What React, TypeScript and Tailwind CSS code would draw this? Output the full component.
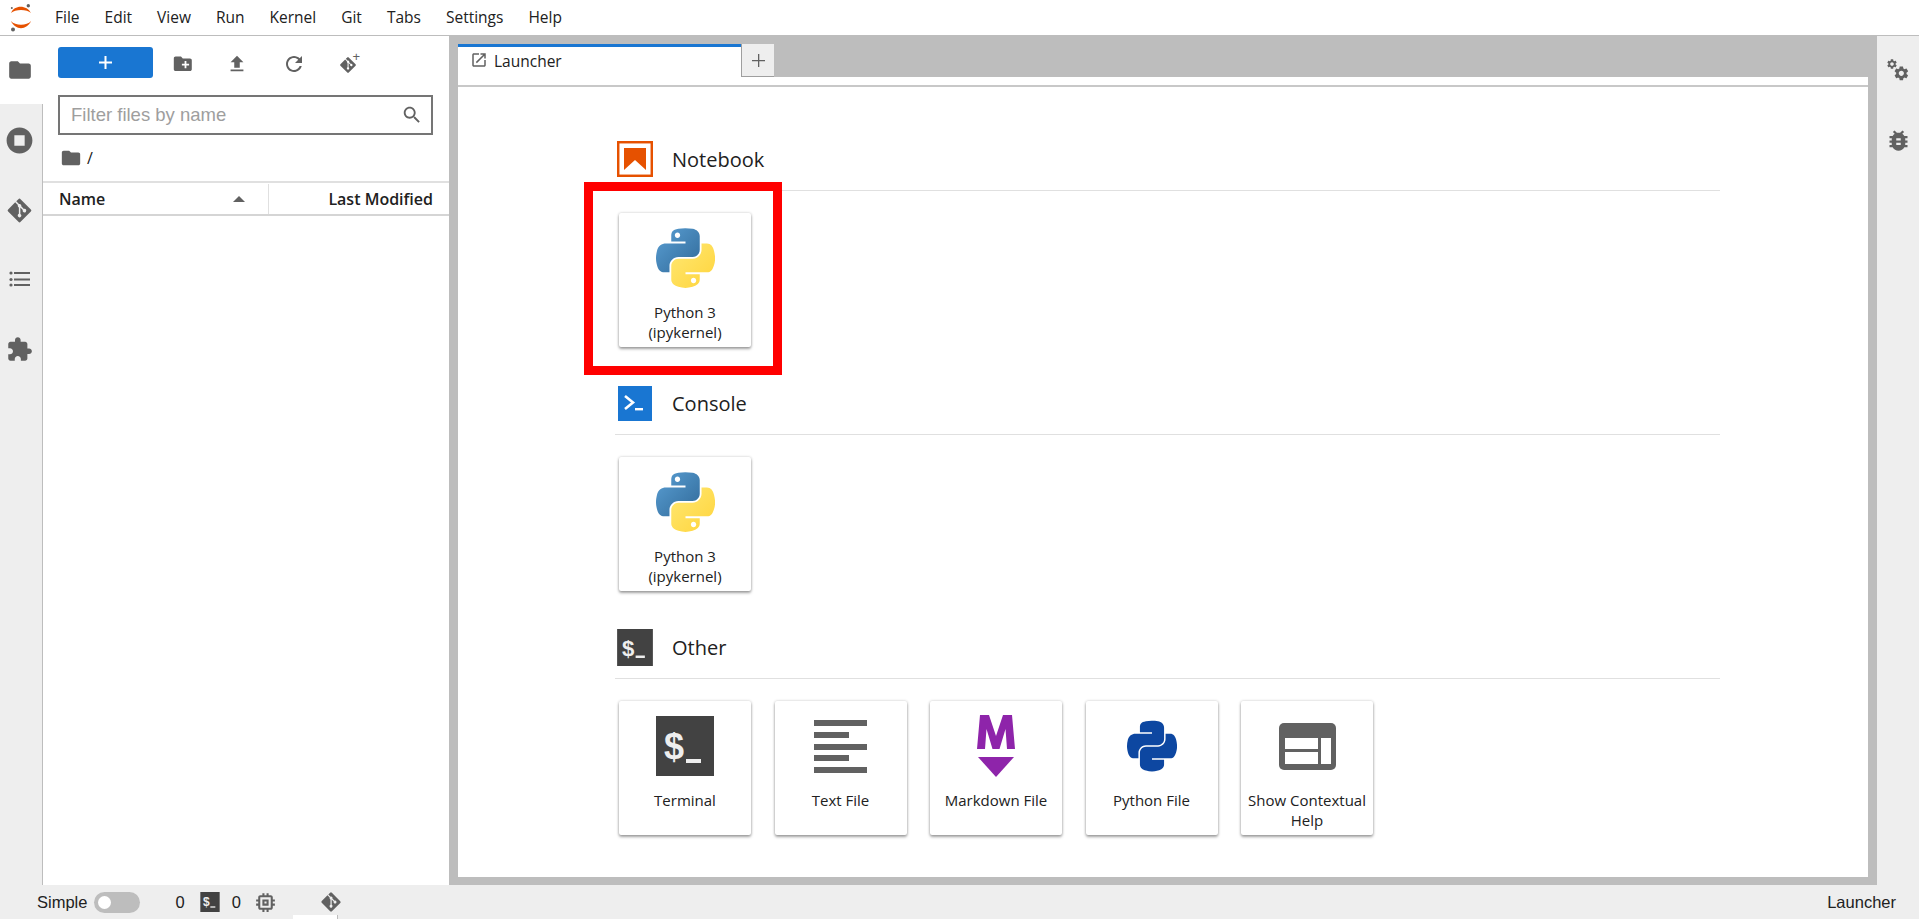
import { FaGitAlt } from "react-icons/fa";

const sans = "font-['Open_Sans',sans-serif]";
const arial = "font-['Liberation_Sans',sans-serif]";

const menus = ["File", "Edit", "View", "Run", "Kernel", "Git", "Tabs", "Settings", "Help"];

const paths = {
  folder: "M10 4H4c-1.1 0-1.99.9-1.99 2L2 18c0 1.1.9 2 2 2h16c1.1 0 2-.9 2-2V8c0-1.1-.9-2-2-2h-8l-2-2z",
  stop: "M12 2C6.48 2 2 6.48 2 12s4.48 10 10 10 10-4.48 10-10S17.52 2 12 2zm4 14H8V8h8v8z",
  extension:
    "M20.5 11H19V7c0-1.1-.9-2-2-2h-4V3.5C13 2.12 11.88 1 10.5 1S8 2.12 8 3.5V5H4c-1.1 0-1.99.9-1.99 2v3.8H3.5c1.49 0 2.7 1.21 2.7 2.7s-1.21 2.7-2.7 2.7H2V20c0 1.1.9 2 2 2h3.8v-1.5c0-1.49 1.21-2.7 2.7-2.7 1.49 0 2.7 1.21 2.7 2.7V22H17c1.1 0 2-.9 2-2v-4h1.5c1.38 0 2.5-1.12 2.5-2.5S21.88 11 20.5 11z",
  newFolder:
    "M20 6h-8l-2-2H4c-1.11 0-1.99.89-1.99 2L2 18c0 1.11.89 2 2 2h16c1.11 0 2-.89 2-2V8c0-1.11-.89-2-2-2zm-1 8h-3v3h-2v-3h-3v-2h3V9h2v3h3v2z",
  upload: "M9 16h6v-6h4l-7-7-7 7h4zm-4 2h14v2H5z",
  refresh:
    "M17.65 6.35C16.2 4.9 14.21 4 12 4c-4.42 0-7.99 3.58-7.99 8s3.57 8 7.99 8c3.73 0 6.84-2.55 7.73-6h-2.08c-.82 2.33-3.04 4-5.65 4-3.31 0-6-2.69-6-6s2.69-6 6-6c1.66 0 3.14.69 4.22 1.78L13 11h7V4l-2.35 2.35z",
  launch:
    "M19 19H5V5h7V3H5c-1.11 0-2 .9-2 2v14c0 1.1.89 2 2 2h14c1.1 0 2-.9 2-2v-7h-2v7zM14 3v2h3.59l-9.83 9.83 1.41 1.41L19 6.41V10h2V3h-7z",
  search:
    "M15.5 14h-.79l-.28-.27C15.41 12.59 16 11.11 16 9.5 16 5.91 13.09 3 9.5 3S3 5.91 3 9.5 5.91 16 9.5 16c1.61 0 3.09-.59 4.23-1.57l.27.28v.79l5 4.99L20.49 19l-4.99-5zm-6 0C7.01 14 5 11.99 5 9.5S7.01 5 9.5 5 14 7.01 14 9.5 11.99 14 9.5 14z",
  bug: "M20 8h-2.81c-.45-.78-1.07-1.45-1.82-1.96L17 4.41 15.59 3l-2.17 2.17C12.96 5.06 12.49 5 12 5c-.49 0-.96.06-1.41.17L8.41 3 7 4.41l1.62 1.63C7.88 6.55 7.26 7.22 6.81 8H4v2h2.09c-.05.33-.09.66-.09 1v1H4v2h2v1c0 .34.04.67.09 1H4v2h2.81c1.04 1.79 2.97 3 5.19 3s4.15-1.21 5.19-3H20v-2h-2.09c.05-.33.09-.66.09-1v-1h2v-2h-2v-1c0-.34-.04-.67-.09-1H20V8zm-6 8h-4v-2h4v2zm0-4h-4v-2h4v2z",
  chip: "M15 9H9v6h6V9zm-2 4h-2v-2h2v2zm8-2V9h-2V7c0-1.1-.9-2-2-2h-2V3h-2v2h-2V3H9v2H7c-1.1 0-2 .9-2 2v2H3v2h2v2H3v2h2v2c0 1.1.9 2 2 2h2v2h2v-2h2v2h2v-2h2c1.1 0 2-.9 2-2v-2h2v-2h-2v-2h2zm-4 6H7V7h10v10z",
  gear: "M19.14 12.94c.04-.3.06-.61.06-.94 0-.32-.02-.64-.07-.94l2.03-1.58c.18-.14.23-.41.12-.61l-1.92-3.32c-.12-.22-.37-.29-.59-.22l-2.39.96c-.5-.38-1.03-.7-1.62-.94l-.36-2.54c-.04-.24-.24-.41-.48-.41h-3.84c-.24 0-.43.17-.47.41l-.36 2.54c-.59.24-1.13.57-1.62.94l-2.39-.96c-.22-.08-.47 0-.59.22L2.74 8.87c-.12.21-.08.47.12.61l2.03 1.58c-.05.3-.09.63-.09.94s.02.64.07.94l-2.03 1.58c-.18.14-.23.41-.12.61l1.92 3.32c.12.22.37.29.59.22l2.39-.96c.5.38 1.03.7 1.62.94l.36 2.54c.05.24.24.41.48.41h3.84c.24 0 .44-.17.47-.41l.36-2.54c.59-.24 1.13-.56 1.62-.94l2.39.96c.22.08.47 0 .59-.22l1.92-3.32c.12-.22.07-.47-.12-.61l-2.01-1.58zM12 15.6c-1.98 0-3.6-1.62-3.6-3.6s1.62-3.6 3.6-3.6 3.6 1.62 3.6 3.6-1.62 3.6-3.6 3.6z",
};

function Mat({ d, className }: { d: string; className: string }) {
  return (
    <svg viewBox="0 0 24 24" className={className}>
      <path d={d} fill="#616161" />
    </svg>
  );
}

const pyBlueBody =
  "M54.92 0C50.34.02 45.96.41 42.11 1.09 30.76 3.1 28.7 7.29 28.7 15.03v10.22h26.81v3.41H18.64c-7.79 0-14.62 4.68-16.75 13.59-2.46 10.21-2.57 16.59 0 27.25 1.91 7.94 6.46 13.59 14.25 13.59h9.22V70.84c0-8.85 7.66-16.66 16.75-16.66h26.78c7.45 0 13.41-6.14 13.41-13.62V15.03c0-7.27-6.13-12.72-13.41-13.94C64.28.33 59.5-.02 54.92 0z";
const pyBlueEye = "M40.42 8.22c2.77 0 5.03 2.3 5.03 5.12 0 2.82-2.26 5.09-5.03 5.09-2.78 0-5.03-2.27-5.03-5.09 0-2.82 2.25-5.12 5.03-5.12z";
const pyYellowBody =
  "M85.64 28.66v11.9c0 9.24-7.83 17-16.75 17H42.11c-7.34 0-13.41 6.28-13.41 13.63v25.53c0 7.27 6.32 11.54 13.41 13.63 8.49 2.5 16.63 2.95 26.78 0 6.75-1.95 13.41-5.89 13.41-13.63V86.5H55.51v-3.41h40.19c7.79 0 10.7-5.43 13.41-13.59 2.8-8.4 2.68-16.48 0-27.25-1.93-7.75-5.6-13.59-13.41-13.59z";
const pyYellowEye = "M70.64 93.31c2.78 0 5.03 2.28 5.03 5.1 0 2.82-2.25 5.12-5.03 5.12-2.77 0-5.03-2.3-5.03-5.12 0-2.82 2.26-5.1 5.03-5.1z";

function PythonLogo() {
  return (
    <svg viewBox="0 0 111 114" className="h-[61px] w-[59px]">
      <defs>
        <linearGradient id="pyB" x1="0" y1="0" x2="1" y2="1">
          <stop offset="0" stopColor="#5a9fd4" />
          <stop offset="1" stopColor="#306998" />
        </linearGradient>
        <linearGradient id="pyY" x1="0" y1="0" x2="1" y2="1">
          <stop offset="0" stopColor="#ffe873" />
          <stop offset="1" stopColor="#ffd43b" />
        </linearGradient>
      </defs>
      <path d={pyBlueBody + pyBlueEye} fill="url(#pyB)" />
      <path d={pyYellowBody + pyYellowEye} fill="url(#pyY)" />
    </svg>
  );
}

function PythonFileIcon() {
  return (
    <svg viewBox="0 0 111 114" className="h-[53px] w-[50px]">
      <path d={pyBlueBody} fill="#0d47a1" />
      <path d={pyYellowBody} fill="#0d47a1" />
    </svg>
  );
}

function TerminalIcon({ className }: { className: string }) {
  return (
    <svg viewBox="0 0 58 60" className={className}>
      <rect width="58" height="60" fill="#424242" />
      <text x="8" y="43" fill="#eeeeee" fontSize="36" fontWeight="700" fontFamily="'Liberation Sans', sans-serif">
        $
      </text>
      <rect x="30" y="43" width="15" height="4" fill="#eeeeee" />
    </svg>
  );
}

function Card({ label, children }: { label: React.ReactNode; children: React.ReactNode }) {
  return (
    <div className="flex h-[134px] w-[132px] flex-col items-center rounded-[2px] bg-white shadow-[0_2px_3px_0_rgba(0,0,0,0.35),0_0_3px_0_rgba(0,0,0,0.2)]">
      <div className="flex h-[90px] w-full shrink-0 items-center justify-center">{children}</div>
      <div className={`${sans} w-full px-[2px] text-center text-[15px] leading-[19.5px] text-[#212121]`}>{label}</div>
    </div>
  );
}

function Section({ icon, title, children }: { icon: React.ReactNode; title: string; children: React.ReactNode }) {
  return (
    <div className="h-[244px]">
      <div className="flex h-[50px] items-start border-b border-[#e0e0e0] pl-[2px]">
        <div className="h-[36px] w-[36px]">{icon}</div>
        <div className={`${sans} ml-[19px] text-[20px] leading-[38px] text-[#212121]`}>{title}</div>
      </div>
      <div className="flex gap-[23.5px] pl-[4px] pt-[22px]">{children}</div>
    </div>
  );
}

export default function App() {
  return (
    <div className={`${arial} flex h-[919px] w-[1919px] flex-col overflow-hidden bg-white`}>
      {/* top menu */}
      <div className="flex h-[36px] shrink-0 items-center border-b border-[#bdbdbd] bg-white">
        <svg viewBox="0 0 40 34" className="h-[34px] w-[40px] shrink-0">
          <path d="M11 12 C14 3.5 27 3.5 31 12 C27 8 15 8 11 12z" fill="#e65100" />
          <path d="M11 20 C15 29.5 27 29.5 31 20 C27 25 15 25 11 20z" fill="#e65100" />
          <circle cx="28.3" cy="4.8" r="1.7" fill="#616161" />
          <circle cx="11.8" cy="7" r="1" fill="#616161" />
          <circle cx="13" cy="28.5" r="2" fill="#616161" />
        </svg>
        <div className={`${sans} ml-[15px] flex gap-[25px] text-[15.5px] text-[#212121]`}>
          {menus.map((m) => (
            <span key={m}>{m}</span>
          ))}
        </div>
      </div>

      <div className="flex min-h-0 flex-1">
        {/* left rail */}
        <div className="flex w-[43px] shrink-0 flex-col items-center border-r border-[#bdbdbd] bg-[#eeeeee] pr-[3px]">
          <div className="flex h-[68px] w-[43px] shrink-0 items-center justify-center self-start bg-white pr-[3px]">
            <Mat d={paths.folder} className="h-[26px] w-[26px]" />
          </div>
          <div className="flex h-[72px] items-center justify-center">
            <Mat d={paths.stop} className="h-[31px] w-[31px]" />
          </div>
          <div className="flex h-[68px] items-center justify-center">
            <FaGitAlt className="h-[27px] w-[27px] text-[#616161]" />
          </div>
          <div className="flex h-[70px] items-center justify-center">
            <svg viewBox="0 0 22 16" className="h-[16px] w-[22px]">
              <circle cx="2" cy="2" r="1.6" fill="#616161" />
              <circle cx="2" cy="8.5" r="1.6" fill="#616161" />
              <circle cx="2" cy="14" r="1.6" fill="#616161" />
              <rect x="5" y="1" width="16" height="2" fill="#616161" />
              <rect x="5" y="7.5" width="16" height="2" fill="#616161" />
              <rect x="5" y="13" width="16" height="2" fill="#616161" />
            </svg>
          </div>
          <div className="flex h-[70px] items-center justify-center">
            <Mat d={paths.extension} className="h-[27px] w-[27px]" />
          </div>
        </div>

        {/* file browser */}
        <div className="flex w-[406px] shrink-0 flex-col bg-white">
          <div className="flex h-[42px] shrink-0 items-end pl-[15px]">
            <div className="flex h-[31px] w-[95px] items-center justify-center rounded-[3px] bg-[#1976d2]">
              <svg viewBox="0 0 13 13" className="h-[13px] w-[13px]">
                <path d="M5.5 0h2v5.5H13v2H7.5V13h-2V7.5H0v-2h5.5z" fill="#fff" />
              </svg>
            </div>
            <div className="flex h-[31px] items-center pt-[2px]">
              <Mat d={paths.newFolder} className="ml-[19px] h-[21.6px] w-[21.6px]" />
              <Mat d={paths.upload} className="ml-[32.5px] h-[22px] w-[22px]" />
              <Mat d={paths.refresh} className="ml-[34px] h-[24px] w-[24px]" />
              <div className="relative ml-[33px] h-[21px] w-[21px]">
                <FaGitAlt className="mt-[3px] h-[18px] w-[18px] text-[#616161]" />
                <span className="absolute right-[0px] top-[-3px] text-[13px] leading-[13px] text-[#616161]">+</span>
              </div>
            </div>
          </div>
          <div className="ml-[15px] mt-[17px] flex h-[40px] w-[375px] shrink-0 items-center justify-between border-2 border-[#757575] pl-[11px] pr-[8px]">
            <span className="text-[18.5px] text-[#9e9e9e]">Filter files by name</span>
            <Mat d={paths.search} className="h-[22px] w-[22px]" />
          </div>
          <div className="ml-[17px] flex h-[46px] shrink-0 items-center pb-[1px]">
            <Mat d={paths.folder} className="h-[22px] w-[22px]" />
            <span className={`${sans} ml-[5px] text-[16px] text-[#212121]`}>/</span>
          </div>
          <div className="flex h-[35px] shrink-0 items-center border-y-2 border-t-[#e0e0e0] border-b-[#d5d5d5]">
            <div className={`${sans} flex h-[30px] w-[226px] items-center justify-between border-r border-[#e0e0e0] pl-[16px] pr-[23px] text-[16px] font-semibold text-[#212121]`}>
              <span>Name</span>
              <svg viewBox="0 0 12 6" className="h-[6px] w-[12px]">
                <path d="M6 0l6 6H0z" fill="#616161" />
              </svg>
            </div>
            <div className={`${sans} flex flex-1 justify-end pr-[16px] text-[16px] font-semibold text-[#212121]`}>Last Modified</div>
          </div>
        </div>

        {/* launcher */}
        <div className="flex min-w-0 flex-1 flex-col bg-[#bdbdbd] px-[9px] pb-[8px] pt-[8px]">
          <div className="flex h-[41px] shrink-0 flex-col bg-[#bdbdbd]">
            <div className="flex h-[33px] shrink-0">
              <div className="z-10 flex h-[41px] w-[283px] items-start gap-[6px] border-t-[3px] border-[#1976d2] bg-white pl-[12px] pt-[4px]">
                <Mat d={paths.launch} className="h-[18px] w-[18px]" />
                <span className={`${sans} text-[15.5px] leading-[20px] text-[#212121]`}>Launcher</span>
              </div>
              <div className="flex h-[33px] w-[33px] items-center justify-center border-l border-b border-[#9e9e9e] bg-[#eeeeee]">
                <svg viewBox="0 0 13 13" className="h-[13px] w-[13px]">
                  <path d="M6 0h1.3v6H13v1.3H7.3V13H6V7.3H0V6h6z" fill="#616161" />
                </svg>
              </div>
            </div>
            <div className="h-[8px] bg-white" />
          </div>
          <div className="min-h-0 flex-1 border-t-2 border-[#c8c8c8] bg-white pl-[157px] pr-[148px] pt-[54px]">
            <Section
              title="Notebook"
              icon={
                <svg viewBox="0 0 36 36" className="h-[36px] w-[36px]">
                  <rect x="1.2" y="1.2" width="33.6" height="33.6" fill="none" stroke="#e65100" strokeWidth="2.5" />
                  <path d="M7 7h22v22l-11-10-11 10z" fill="#e65100" />
                </svg>
              }
            >
              <div className="relative">
                <Card label={<>Python 3<br />(ipykernel)</>}>
                  <PythonLogo />
                </Card>
                <div className="absolute -bottom-[28px] -left-[35px] -right-[31px] -top-[31px] border-[9px] border-[#ff0000]" />
              </div>
            </Section>
            <Section
              title="Console"
              icon={
                <svg viewBox="0 0 36 36" className="h-[36px] w-[36px]">
                  <rect x="1" y="1" width="34" height="35" fill="#1976d2" />
                  <path d="M8 11l8 6.5-8 6.5" fill="none" stroke="#fff" strokeWidth="2.6" />
                  <rect x="18" y="23" width="8" height="2.4" fill="#fff" />
                </svg>
              }
            >
              <Card label={<>Python 3<br />(ipykernel)</>}>
                <PythonLogo />
              </Card>
            </Section>
            <Section title="Other" icon={<TerminalIcon className="h-[37px] w-[36px]" />}>
              <Card label="Terminal">
                <TerminalIcon className="h-[60px] w-[58px]" />
              </Card>
              <Card label="Text File">
                <svg viewBox="0 0 53 53" className="h-[53px] w-[53px]">
                  <rect width="53" height="6" fill="#616161" />
                  <rect y="12" width="35" height="6" fill="#616161" />
                  <rect y="24" width="53" height="6" fill="#616161" />
                  <rect y="35" width="35" height="6" fill="#616161" />
                  <rect y="47" width="53" height="6" fill="#616161" />
                </svg>
              </Card>
              <Card label="Markdown File">
                <svg viewBox="0 0 40 62" className="h-[62px] w-[40px]">
                  <path d="M4 0h9l7 21 7-21h9l3 34h-8l-1.5-20-6 20h-7l-6-20-1.5 20H1z" fill="#8e24aa" />
                  <path d="M2 42h36L20 62z" fill="#8e24aa" />
                </svg>
              </Card>
              <Card label="Python File">
                <PythonFileIcon />
              </Card>
              <Card label="Show Contextual Help">
                <svg viewBox="0 0 57 47" className="h-[47px] w-[57px]">
                  <rect width="57" height="47" rx="5" fill="#616161" />
                  <rect x="6" y="15" width="33" height="11" fill="#fff" />
                  <rect x="6" y="29" width="33" height="12" fill="#fff" />
                  <rect x="42" y="15" width="10" height="26" fill="#fff" />
                </svg>
              </Card>
            </Section>
          </div>
        </div>

        {/* right rail */}
        <div className="flex w-[42px] shrink-0 flex-col items-center bg-[#eeeeee] pt-[22px]">
          <svg viewBox="0 0 24 24" className="h-[24px] w-[24px]">
            <path d={paths.gear} fill="#616161" transform="scale(0.5)" />
            <path d={paths.gear} fill="#616161" transform="translate(6.7 6.7) scale(0.72)" />
          </svg>
          <Mat d={paths.bug} className="mt-[45px] h-[27px] w-[27px]" />
        </div>
      </div>

      {/* status bar */}
      <div className="relative flex h-[34px] shrink-0 items-center bg-[#eeeeee] text-[16.5px] text-[#212121]">
        <span className="ml-[37px]">Simple</span>
        <div className="ml-[7px] flex h-[21px] w-[46px] items-center rounded-full bg-[#bdbdbd] pl-[4px]">
          <div className="h-[13px] w-[13px] rounded-full bg-white" />
        </div>
        <span className="ml-[35px]">0</span>
        <TerminalIcon className="ml-[15px] h-[20px] w-[20px]" />
        <span className="ml-[12px]">0</span>
        <Mat d={paths.chip} className="ml-[12px] h-[25px] w-[25px]" />
        <FaGitAlt className="ml-[42px] h-[22px] w-[22px] text-[#616161]" />
        <span className="ml-auto mr-[23px]">Launcher</span>
        <div className="absolute bottom-0 left-[293px] h-[4px] w-[45px] border-r border-[#bdbdbd] bg-white" />
      </div>
    </div>
  );
}
